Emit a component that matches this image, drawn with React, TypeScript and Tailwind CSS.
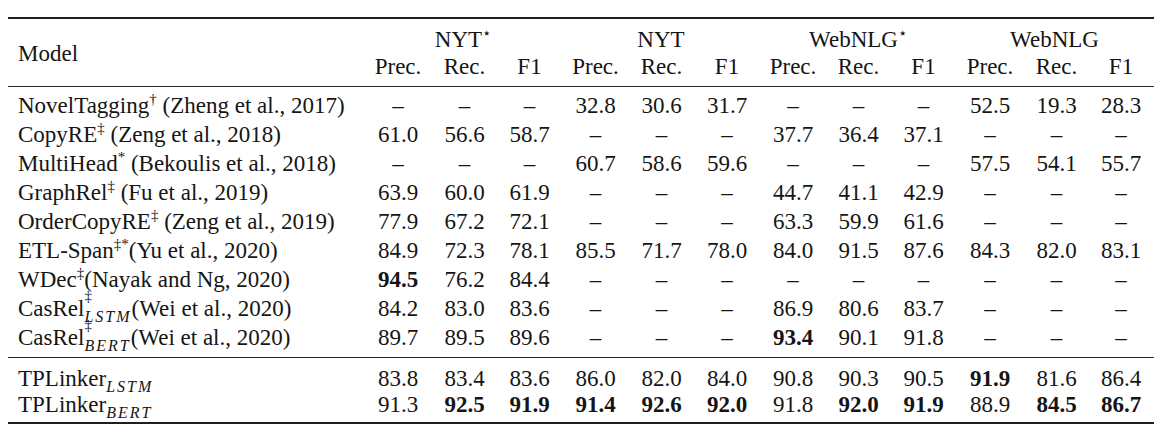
import React from "react";

type Cell = string | { b: string };

const Sup = ({ children }: { children: React.ReactNode }) => (
  <span className="relative top-[-9px] text-[15px] leading-none">{children}</span>
);

const Sub = ({ children }: { children: React.ReactNode }) => (
  <span className="relative top-[6px] text-[16px] italic tracking-[2px] leading-none">{children}</span>
);

const SupSub = ({ sub }: { sub: string }) => (
  <span className="relative inline-block">
    <span className="absolute left-0 top-[-8px] text-[15px] leading-none">‡</span>
    <span className="relative top-[6px] text-[16px] italic tracking-[2px] leading-none">{sub}</span>
  </span>
);

const D = "–";

const parse = (s: string): Cell[] =>
  s.split(" ").map((t) => (t.startsWith("*") ? { b: t.slice(1) } : t === "-" ? D : t));

const section1: { name: React.ReactNode; cells: Cell[] }[] = [
  {
    name: (
      <>
        NovelTagging<Sup>†</Sup> (Zheng et al., 2017)
      </>
    ),
    cells: parse("- - - 32.8 30.6 31.7 - - - 52.5 19.3 28.3"),
  },
  {
    name: (
      <>
        CopyRE<Sup>‡</Sup> (Zeng et al., 2018)
      </>
    ),
    cells: parse("61.0 56.6 58.7 - - - 37.7 36.4 37.1 - - -"),
  },
  {
    name: (
      <>
        MultiHead<Sup>*</Sup> (Bekoulis et al., 2018)
      </>
    ),
    cells: parse("- - - 60.7 58.6 59.6 - - - 57.5 54.1 55.7"),
  },
  {
    name: (
      <>
        GraphRel<Sup>‡</Sup> (Fu et al., 2019)
      </>
    ),
    cells: parse("63.9 60.0 61.9 - - - 44.7 41.1 42.9 - - -"),
  },
  {
    name: (
      <>
        OrderCopyRE<Sup>‡</Sup> (Zeng et al., 2019)
      </>
    ),
    cells: parse("77.9 67.2 72.1 - - - 63.3 59.9 61.6 - - -"),
  },
  {
    name: (
      <>
        ETL-Span<Sup>‡*</Sup>(Yu et al., 2020)
      </>
    ),
    cells: parse("84.9 72.3 78.1 85.5 71.7 78.0 84.0 91.5 87.6 84.3 82.0 83.1"),
  },
  {
    name: (
      <>
        WDec<Sup>‡</Sup>(Nayak and Ng, 2020)
      </>
    ),
    cells: parse("*94.5 76.2 84.4 - - - - - - - - -"),
  },
  {
    name: (
      <>
        CasRel<SupSub sub="LSTM" />(Wei et al., 2020)
      </>
    ),
    cells: parse("84.2 83.0 83.6 - - - 86.9 80.6 83.7 - - -"),
  },
  {
    name: (
      <>
        CasRel<SupSub sub="BERT" />(Wei et al., 2020)
      </>
    ),
    cells: parse("89.7 89.5 89.6 - - - *93.4 90.1 91.8 - - -"),
  },
];

const section2: { name: React.ReactNode; cells: Cell[] }[] = [
  {
    name: (
      <>
        TPLinker<Sub>LSTM</Sub>
      </>
    ),
    cells: parse("83.8 83.4 83.6 86.0 82.0 84.0 90.8 90.3 90.5 *91.9 81.6 86.4"),
  },
  {
    name: (
      <>
        TPLinker<Sub>BERT</Sub>
      </>
    ),
    cells: parse("91.3 *92.5 *91.9 *91.4 *92.6 *92.0 91.8 *92.0 *91.9 88.9 *84.5 *86.7"),
  },
];

const GRID =
  "grid grid-cols-[356px_68px_65px_65px_67px_65px_66px_66px_65px_65px_68px_65px_64px]";

const Row = ({ name, cells, h }: { name: React.ReactNode; cells: Cell[]; h: string }) => (
  <div className={`${GRID} ${h} items-center`}>
    <div className="pl-[10px] whitespace-nowrap">{name}</div>
    {cells.map((c, i) => (
      <div key={i} className="text-center">
        {typeof c === "string" ? c : <span className="font-bold">{c.b}</span>}
      </div>
    ))}
  </div>
);

export default function App() {
  const sub = ["Prec.", "Rec.", "F1"];
  return (
    <div className="w-[1166px] h-[439px] bg-white pt-[17px] pl-[8px] font-['Liberation_Serif','Times_New_Roman',serif] text-[23px] leading-none text-[#151515]">
      <div className="w-[1146px] border-t-2 border-[#1e1e1e]">
        <div className={`${GRID} grid-rows-[27px_27px] pt-[7px] pb-[6px] border-b border-[#2a2a2a] items-center`}>
          <div className="row-span-2 pl-[10px] self-center">Model</div>
          <div className="col-span-3 text-center">
            NYT<Sup>⋆</Sup>
          </div>
          <div className="col-span-3 text-center">NYT</div>
          <div className="col-span-3 text-center">
            WebNLG<Sup>⋆</Sup>
          </div>
          <div className="col-span-3 text-center">WebNLG</div>
          {[0, 1, 2, 3].flatMap((g) =>
            sub.map((s) => (
              <div key={`${g}-${s}`} className="text-center">
                {s}
              </div>
            ))
          )}
        </div>
        <div className="pt-[4px] pb-[5px] border-b border-[#2a2a2a]">
          {section1.map((r, i) => (
            <Row key={i} name={r.name} cells={r.cells} h="h-[29px]" />
          ))}
        </div>
        <div className="pt-[7px] pb-[5px] border-b-2 border-[#1e1e1e]">
          {section2.map((r, i) => (
            <Row key={i} name={r.name} cells={r.cells} h="h-[26px]" />
          ))}
        </div>
      </div>
    </div>
  );
}
